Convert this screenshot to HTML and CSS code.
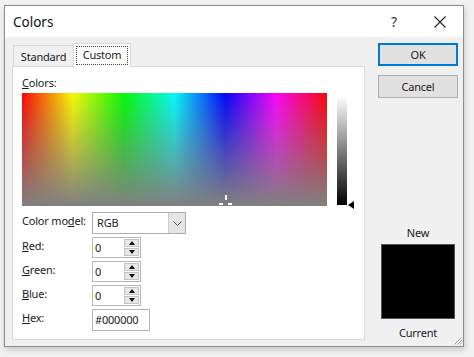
FILE: index.html
```html
<!DOCTYPE html>
<html>
<head>
<meta charset="utf-8">
<link rel="stylesheet" href="styles.css">
</head>
<body>
<div class="window">
  <div class="titlebar">
    <span class="title">Colors</span>
    <span class="tb-help">?</span>
    <span class="tb-close">
      <svg width="12" height="12" viewBox="0 0 12 12"><path d="M0.5 0.5 L11.5 11.5 M11.5 0.5 L0.5 11.5" stroke="#222" stroke-width="1.1" fill="none"/></svg>
    </span>
  </div>
  <div class="client">
    <div class="leftcol">
      <div class="tabs">
        <div class="tab">Standard</div>
        <div class="tab active"><span class="focus">Custom</span></div>
      </div>
      <div class="panel">
        <div class="colors-label"><u>C</u>olors:</div>
        <div class="picker-row">
          <div class="spectrum">
            <div class="cross">
              <span class="c-top"></span>
              <span class="c-left"></span>
              <span class="c-right"></span>
            </div>
          </div>
          <div class="lum-wrap">
            <div class="lum"></div>
            <div class="lum-arrow"></div>
          </div>
        </div>
        <div class="form">
          <div class="row">
            <label>Color mo<u>d</u>el:</label>
            <div class="select"><span class="sel-val">RGB</span><span class="sel-btn"><svg width="9" height="5" viewBox="0 0 9 5"><path d="M0.5 0.5 L4.5 4.5 L8.5 0.5" stroke="#555" fill="none"/></svg></span></div>
          </div>
          <div class="row">
            <label><u>R</u>ed:</label>
            <div class="spin"><span class="spin-val">0</span><span class="spin-btns"><span class="sb"><i class="up"></i></span><span class="sb"><i class="down"></i></span></span></div>
          </div>
          <div class="row">
            <label><u>G</u>reen:</label>
            <div class="spin"><span class="spin-val">0</span><span class="spin-btns"><span class="sb"><i class="up"></i></span><span class="sb"><i class="down"></i></span></span></div>
          </div>
          <div class="row">
            <label><u>B</u>lue:</label>
            <div class="spin"><span class="spin-val">0</span><span class="spin-btns"><span class="sb"><i class="up"></i></span><span class="sb"><i class="down"></i></span></span></div>
          </div>
          <div class="row">
            <label><u>H</u>ex:</label>
            <div class="hex">#000000</div>
          </div>
        </div>
      </div>
    </div>
    <div class="rightcol">
      <div class="btn default">OK</div>
      <div class="btn">Cancel</div>
      <div class="spacer"></div>
      <div class="swatch-label">New</div>
      <div class="swatch"></div>
      <div class="swatch-label cur">Current</div>
    </div>
  </div>
  <div class="grip">
    <svg width="8" height="8" viewBox="0 0 8 8"><path d="M7.5 0.5 L0.5 7.5 M7.5 3.5 L3.5 7.5 M7.5 6 L6 7.5" stroke="#9a9a9a" fill="none"/></svg>
  </div>
</div>
</body>
</html>
```
FILE: styles.css
```css
* { box-sizing: border-box; }
html, body { margin: 0; padding: 0; }
body {
  background: #f2f2f2;
  width: 474px;
  height: 357px;
  overflow: hidden;
  font-family: "Noto Sans", "Open Sans", sans-serif;
  font-size: 11px;
  letter-spacing: -0.2px;
  color: #1a1a1a;
}
.window {
  position: relative;
  margin: 5px 0 0 4px;
  width: 460px;
  height: 342px;
  border: 1px solid #8c8c8c;
  background: #f0f0f0;
  box-shadow: 1px 3px 6px rgba(0,0,0,0.18);
  display: flex;
  flex-direction: column;
}
.titlebar {
  height: 31px;
  background: #ffffff;
  display: flex;
  align-items: center;
  padding-left: 8px;
  flex: none;
}
.title { font-size: 13.5px; flex: 1; color: #111; letter-spacing: 0; }
.tb-help { width: 46px; text-align: center; font-size: 14px; color: #333; }
.tb-close { width: 46px; display: flex; justify-content: center; align-items: center; }
.client {
  flex: 1;
  display: flex;
  padding: 6px 0 0 7px;
}
.leftcol { display: flex; flex-direction: column; width: 353px; }
.tabs { display: flex; height: 23px; align-items: flex-end; padding-left: 1px; }
.tab {
  height: 21px;
  width: 61px;
  justify-content: center;
  display: flex;
  align-items: center;
  border: 1px solid #d9d9d9;
  border-bottom: none;
  background: #f0f0f0;
}
.tab.active {
  width: 58px;
  height: 24px;
  margin-left: -1px;
  background: #ffffff;
  margin-bottom: -1px;
  position: relative;
  z-index: 1;
}
.focus {
  border: 1px dotted #444;
  padding: 1px 6px 2px 6px;
  line-height: 14px;
}
.panel {
  height: 274px;
  background: #ffffff;
  border: 1px solid #d9d9d9;
  padding: 9px 0 0 9px;
}
.colors-label { height: 17px; line-height: 14px; }
.picker-row { display: flex; align-items: flex-start; }
.spectrum {
  position: relative;
  width: 305px;
  height: 113px;
  background:
    linear-gradient(to bottom, rgba(128,128,128,0.05) 0%, rgba(128,128,128,1) 100%),
    linear-gradient(to right, #ff0000 0%, #ffff00 16.67%, #00ff00 33.33%, #00ffff 50%, #0000ff 66.67%, #ff00ff 83.33%, #ff0000 100%);
}
.cross { position: absolute; left: 197px; top: 102px; width: 13px; height: 11px; }
.cross span { position: absolute; background: #fff; }
.c-top { left: 6px; top: 0; width: 2px; height: 5px; }
.c-left { left: 0; top: 8px; width: 4px; height: 2px; }
.c-right { left: 9px; top: 8px; width: 4px; height: 2px; }
.lum-wrap { position: relative; margin-left: 10px; width: 20px; height: 113px; padding-top: 3px; }
.lum {
  width: 10px;
  height: 109px;
  background: linear-gradient(to bottom, #ffffff 0%, #808080 50%, #000000 100%);
}
.lum-arrow {
  position: absolute;
  left: 11px;
  top: 108px;
  width: 0; height: 0;
  border-top: 4px solid transparent;
  border-bottom: 4px solid transparent;
  border-right: 6px solid #000;
}
.form { margin-top: 6px; display: flex; flex-direction: column; gap: 3px; }
.row { display: flex; align-items: flex-start; }
.row label { width: 70px; padding-top: 2px; line-height: 14px; }
.select {
  width: 94px; height: 22px;
  border: 1px solid #adadad;
  display: flex;
  background: #fff;
}
.sel-val { flex: 1; padding: 3px 0 0 4px; line-height: 14px; }
.sel-btn {
  width: 17px;
  background: #e5e5e5;
  border-left: 1px solid #cfcfcf;
  display: flex; align-items: center; justify-content: center;
}
.spin {
  width: 49px; height: 21px;
  border: 1px solid #b4b4b4;
  display: flex;
  background: #fff;
}
.spin-val { flex: 1; padding: 3px 0 0 2px; line-height: 14px; }
.spin-btns { width: 16px; display: flex; flex-direction: column; padding: 1px 1px 1px 0; gap: 1px; }
.sb {
  flex: 1;
  background: #e8e8e8;
  border: 1px solid #c4c4c4;
  display: flex; align-items: center; justify-content: center;
}
.sb i { width: 0; height: 0; border-left: 3px solid transparent; border-right: 3px solid transparent; }
.sb i.up { border-bottom: 4px solid #111; }
.sb i.down { border-top: 4px solid #111; }
.hex {
  width: 58px; height: 22px;
  border: 1px solid #b4b4b4;
  background: #fff;
  padding: 3px 0 0 2px;
  line-height: 14px;
}
.rightcol {
  margin-left: 13px;
  width: 80px;
  display: flex;
  flex-direction: column;
  align-items: center;
}
.btn {
  width: 80px; height: 23px;
  background: #e1e1e1;
  border: 1px solid #adadad;
  text-align: center;
  line-height: 21px;
  margin-bottom: 8px;
}
.btn.default { border: 2px solid #0078d7; line-height: 19px; margin-bottom: 9px; }
.spacer { height: 120px; }
.swatch-label { line-height: 14px; height: 14px; margin-bottom: 4px; }
.swatch-label.cur { margin-top: 7px; }
.swatch { width: 74px; height: 75px; background: #000; border: 1px solid #555; }
.grip { position: absolute; right: 1px; bottom: 1px; width: 8px; height: 8px; line-height: 0; }
```
